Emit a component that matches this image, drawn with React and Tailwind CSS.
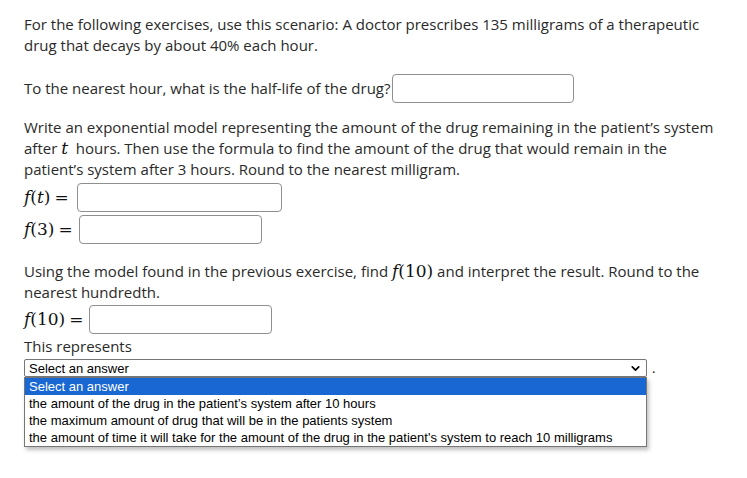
import { ChevronDown } from "lucide-react";

function M({ children }) {
  return (
    <span className="font-['DejaVu_Serif',serif] text-[17px] leading-none text-[#111]">
      {children}
    </span>
  );
}

function I({ children }) {
  return <i className="italic">{children}</i>;
}

function Box({ w }) {
  return (
    <span
      className={`inline-block h-[29px] ${w} rounded-[4px] border border-[#8f8f8f] bg-white align-middle`}
    />
  );
}

function MathRow({ label, w, gap = "mr-[6px]" }) {
  return (
    <div className="flex h-[32px] items-center">
      <M>{label}</M>
      <M>
        <span className={`ml-[4px] ${gap}`}>=</span>
      </M>
      <Box w={w} />
    </div>
  );
}

const options = [
  "Select an answer",
  "the amount of the drug in the patient\u2019s system after 10 hours",
  "the maximum amount of drug that will be in the patients system",
  "the amount of time it will take for the amount of the drug in the patient's system to reach 10 milligrams",
];

export default function App() {
  return (
    <div className="min-h-[478px] w-[747px] bg-white pl-[24px] pt-[14px] font-['Open_Sans',sans-serif] text-[15px] leading-[21px] text-[#2a2a2a]">
      <p>
        For the following exercises, use this scenario: A doctor prescribes 135 milligrams of a therapeutic
        <br />
        drug that decays by about 40% each hour.
      </p>

      <div className="mt-[18px] flex items-center">
        <span>To the nearest hour, what is the half-life of the drug?</span>
        <span className="ml-[2px]">
          <Box w="w-[182px]" />
        </span>
      </div>

      <p className="mt-[14px]">
        Write an exponential model representing the amount of the drug remaining in the patient&rsquo;s system
        <br />
        after <M><I>t</I></M>&nbsp; hours. Then use the formula to find the amount of the drug that would remain in the
        <br />
        patient&rsquo;s system after 3 hours. Round to the nearest milligram.
      </p>

      <div className="mt-[1px]">
        <MathRow label={<><I>f</I>(<I>t</I>)</>} w="w-[205px]" gap="mr-[8px]" />
        <MathRow label={<><I>f</I>(3)</>} w="w-[183px]" />
      </div>

      <p className="mt-[16px]">
        Using the model found in the previous exercise, find <M><I>f</I>(10)</M> and interpret the result. Round to the
        <br />
        nearest hundredth.
      </p>

      <MathRow label={<><I>f</I>(10)</>} w="w-[183px]" />

      <p className="mt-[1px]">This represents</p>

      <div className="relative mt-[2px] w-[640px]">
        <div className="flex items-center">
          <div className="flex h-[18px] w-[623px] items-center justify-between rounded-[2px] border border-[#767676] bg-white pl-[4px] pr-[4px] font-['Liberation_Sans',Arial,sans-serif] text-[13px] leading-none text-black">
            <span>Select an answer</span>
            <ChevronDown size={13} strokeWidth={3} />
          </div>
          <span className="ml-[5px] text-[13px] leading-none text-black">.</span>
        </div>
        <div className="w-[623px] border border-[#767676] bg-white font-['Liberation_Sans',Arial,sans-serif] text-[13px] leading-[17px] text-black shadow-[2px_3px_4px_rgba(0,0,0,0.25)]">
          {options.map((o, i) => (
            <div
              key={o}
              className={`h-[17px] whitespace-nowrap pl-[4px] ${
                i === 0 ? "bg-[#1967d2] text-white" : ""
              }`}
            >
              {o}
            </div>
          ))}
        </div>
      </div>
    </div>
  );
}
